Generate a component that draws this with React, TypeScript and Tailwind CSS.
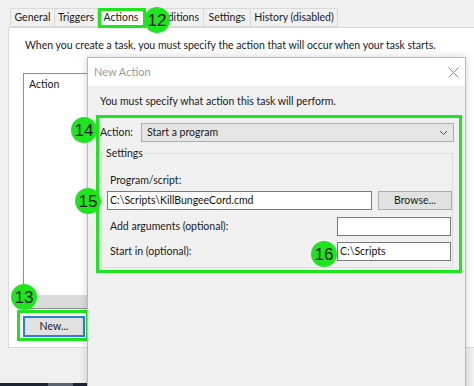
import React from 'react';

const FONT = "font-['Lato',sans-serif]";

const tabs = [
  { label: 'General', w: 'w-[45px]' },
  { label: 'Triggers', w: 'w-[44px]' },
  { label: 'Actions', w: 'w-[48px]', active: true },
  { label: 'Conditions', w: 'w-[60px]' },
  { label: 'Settings', w: 'w-[48px]' },
  { label: 'History (disabled)', w: 'w-[88px]' },
];

const Badge = ({ n, className }: { n: number; className: string }) => (
  <div
    className={`absolute w-[26px] h-[26px] rounded-full bg-[#1ee61e] flex items-center justify-center text-[17px] leading-none text-[#111] font-['Liberation_Sans',sans-serif] ${className}`}
  >
    {n}
  </div>
);

const TextBox = ({ value, className }: { value?: string; className: string }) => (
  <div className={`h-[19px] bg-white border border-[#7a7a7a] pl-[2px] flex items-center leading-none text-[#111] ${className}`}>
    {value}
  </div>
);

export default function App() {
  return (
    <div className={`relative w-[474px] h-[386px] overflow-hidden bg-[#f0f0f0] text-[10.5px] text-[#1a1a1a] whitespace-nowrap ${FONT}`}>
      {/* task properties window */}
      <div className="flex pl-[10px] pt-[8px] h-[27px]">
        {tabs.map((t) => (
          <div
            key={t.label}
            className={`${t.w} h-[19px] flex items-center justify-center border border-[#d9d9d9] -ml-px first:ml-0 ${t.active ? 'bg-white' : 'bg-[#f0f0f0]'}`}
          >
            {t.label}
          </div>
        ))}
      </div>
      <div className="ml-[8px] h-[321px] bg-white border-t border-l border-b border-[#d9d9d9] pl-[16px] pt-[10px]">
        <p className="leading-[15px]">
          When you create a task, you must specify the action that will occur when your task starts.
        </p>
        <div className="ml-[-2px] mt-[20px] w-[90px] h-[236px] border border-[#8e8f8f] flex flex-col">
          <div className="pl-[5px] pt-[3px] leading-[15px]">Action</div>
          <div className="flex-1" />
          <div className="h-[13px] bg-[#dadada]" />
        </div>
        <div className="ml-[-2px] mt-[7px] w-[62px] h-[21px] bg-[#e1e1e1] border-2 border-[#2b7fd6] flex items-center justify-center leading-none">
          New...
        </div>
      </div>
      <div className="mt-[35px] h-[3px] flex">
        <div className="w-[48px] bg-[#1d2430]" />
        <div className="w-[25px] bg-[#5b6270]" />
        <div className="w-[20px] bg-[#1d2430]" />
      </div>

      {/* callouts around window parts */}
      <div className="absolute left-[98px] top-[8px] w-[48px] h-[20px] border-[3px] border-[#1ee61e]" />
      <div className="absolute left-[17px] top-[310px] w-[72px] h-[31px] border-[3px] border-[#1ee61e]" />

      {/* New Action dialog */}
      <div className="absolute left-[87px] top-[57px] w-[379px] h-[340px] bg-[#f0f0f0] border border-[#b9b9b9] shadow-[0_0_8px_rgba(0,0,0,0.18)] flex flex-col">
        <div className="h-[28px] bg-white flex items-center justify-between pl-[6px] pr-[6px]">
          <span className="text-[#9a9a9a] text-[11px]">New Action</span>
          <svg width="11" height="11" viewBox="0 0 11 11" className="text-[#8a8a8a]">
            <path d="M0.5 0.5L10.5 10.5M10.5 0.5L0.5 10.5" stroke="currentColor" strokeWidth="1" fill="none" />
          </svg>
        </div>
        <div className="pl-[8px] pt-[8px]">
          <p className="pl-[4px] leading-[15px]">You must specify what action this task will perform.</p>
          <div className="mt-[6px] w-[366px] h-[158px] border-[3px] border-[#1ee61e] pl-[1px] pt-[5px]">
            <div className="flex items-center">
              <span className="w-[41px]">Action:</span>
              <div className="w-[313px] h-[19px] bg-[#e5e5e5] border border-[#adadad] flex items-center justify-between pl-[5px] pr-[5px] leading-none">
                <span>Start a program</span>
                <svg width="9" height="6" viewBox="0 0 9 6">
                  <path d="M1 1L4.5 4.5L8 1" stroke="#555" strokeWidth="1" fill="none" />
                </svg>
              </div>
            </div>
            <fieldset className="ml-[1px] mt-[4px] w-[352px] h-[122px] border border-[#dcdcdc] px-0 pb-0">
              <legend className="ml-[2px] px-[2px] leading-[15px]">Settings</legend>
              <div className="pl-[8px] mt-[12px] leading-[14px]">Program/script:</div>
              <div className="flex items-center mt-[4px] pl-[5px]">
                <TextBox value={'C:\\Scripts\\KillBungeeCord.cmd'} className="w-[265px]" />
                <div className="ml-[6px] w-[74px] h-[19px] bg-[#e1e1e1] border border-[#adadad] flex items-center justify-center leading-none">
                  Browse...
                </div>
              </div>
              <div className="flex items-center justify-between mt-[7px] pl-[8px] pr-[1px]">
                <span>Add arguments (optional):</span>
                <TextBox className="w-[114px]" />
              </div>
              <div className="flex items-center justify-between mt-[6px] pl-[8px] pr-[1px]">
                <span>Start in (optional):</span>
                <TextBox value={'C:\\Scripts'} className="w-[114px]" />
              </div>
            </fieldset>
          </div>
        </div>
      </div>

      <Badge n={12} className="left-[144px] top-[7px]" />
      <Badge n={14} className="left-[71px] top-[117px]" />
      <Badge n={15} className="left-[75px] top-[188px]" />
      <Badge n={16} className="left-[311px] top-[241px]" />
      <Badge n={13} className="left-[11px] top-[284px]" />
    </div>
  );
}
